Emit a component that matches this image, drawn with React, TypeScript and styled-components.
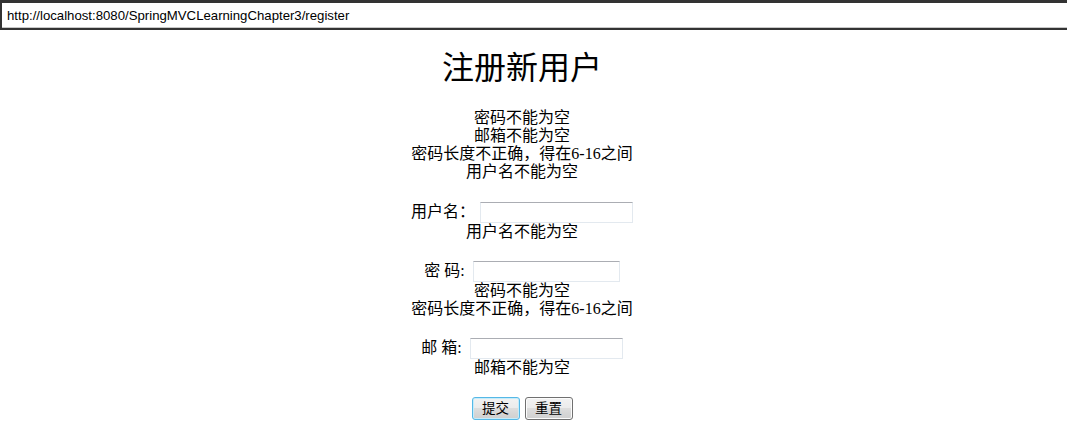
import React from "react";
import styled, { createGlobalStyle } from "styled-components";

const Global = createGlobalStyle`
  html, body { margin: 0; padding: 0; background: #ffffff; }
  body { font-family: "Liberation Serif", "Noto Sans CJK SC", serif; color: #000; }
`;

const Frame = styled.div`
  background: #333333;
  height: 30px;
  padding: 3px 0 2px 2px;
  box-sizing: border-box;
`;

const AddressField = styled.div`
  height: 25px;
  box-sizing: border-box;
  background: #ffffff;
  border-bottom: 1px solid #c8c8c8;
  padding-left: 5px;
  display: flex;
  align-items: center;
  font-family: "Liberation Sans", "Noto Sans CJK SC", sans-serif;
  font-size: 13.2px;
  color: #000;
`;

const Page = styled.main`
  width: 1044px;
  padding-top: 20px;
  text-align: center;
`;

const Title = styled.h1`
  margin: 0;
  font-size: 32px;
  line-height: 36px;
  font-weight: normal;
`;

const ErrorList = styled.div<{ $top?: number }>`
  margin-top: ${(p) => p.$top ?? 0}px;
  font-size: 16px;
  line-height: 18px;
`;

const ErrorLine = styled.div``;

const Form = styled.form`
  margin-top: 21px;
  display: flex;
  flex-direction: column;
  gap: 20px;
`;

const FieldGroup = styled.div``;

const FieldRow = styled.div`
  height: 20px;
  display: flex;
  justify-content: center;
  align-items: center;
  font-size: 16px;
`;

const Label = styled.label<{ $gap: number }>`
  margin-right: ${(p) => p.$gap}px;
  line-height: 18px;
`;

const TextInput = styled.input<{ $w: number }>`
  width: ${(p) => p.$w}px;
  height: 21px;
  box-sizing: border-box;
  margin: 0;
  border: 1px solid #e3e9ef;
  border-top-color: #abadb3;
  background: #fff;
  outline: none;
`;

const ButtonRow = styled.div`
  display: flex;
  justify-content: center;
  gap: 5px;
`;

const Button = styled.button<{ $focused?: boolean }>`
  width: 48px;
  height: 23px;
  box-sizing: border-box;
  padding: 0;
  border-radius: 3px;
  border: 1px solid ${(p) => (p.$focused ? "#56b8e6" : "#707070")};
  background: linear-gradient(#f2f2f2 0%, #ebebeb 50%, #dddddd 50%, #cfcfcf 100%);
  box-shadow: inset 0 0 0 1px ${(p) => (p.$focused ? "#c4ecfb" : "#fcfcfc")};
  font-family: "Liberation Sans", "Noto Sans CJK SC", sans-serif;
  font-size: 13.5px;
  color: #000;
  line-height: 20px;
`;

const fields = [
  { label: "用户名：", gap: 5, w: 153, type: "text", errors: ["用户名不能为空"] },
  { label: "密 码:", gap: 8, w: 147, type: "password", errors: ["密码不能为空", "密码长度不正确，得在6-16之间"] },
  { label: "邮 箱:", gap: 8, w: 153, type: "text", errors: ["邮箱不能为空"] },
];

const summary = ["密码不能为空", "邮箱不能为空", "密码长度不正确，得在6-16之间", "用户名不能为空"];

export default function App() {
  return (
    <>
      <Global />
      <Frame>
        <AddressField>http://localhost:8080/SpringMVCLearningChapter3/register</AddressField>
      </Frame>
      <Page>
        <Title>注册新用户</Title>
        <ErrorList $top={23}>
          {summary.map((s, i) => (
            <ErrorLine key={i}>{s}</ErrorLine>
          ))}
        </ErrorList>
        <Form onSubmit={(e) => e.preventDefault()}>
          {fields.map((f, i) => (
            <FieldGroup key={i}>
              <FieldRow>
                <Label $gap={f.gap}>{f.label}</Label>
                <TextInput $w={f.w} type={f.type} />
              </FieldRow>
              <ErrorList $top={1}>
                {f.errors.map((e, j) => (
                  <ErrorLine key={j}>{e}</ErrorLine>
                ))}
              </ErrorList>
            </FieldGroup>
          ))}
          <ButtonRow>
            <Button type="submit" $focused>提交</Button>
            <Button type="reset">重置</Button>
          </ButtonRow>
        </Form>
      </Page>
    </>
  );
}
